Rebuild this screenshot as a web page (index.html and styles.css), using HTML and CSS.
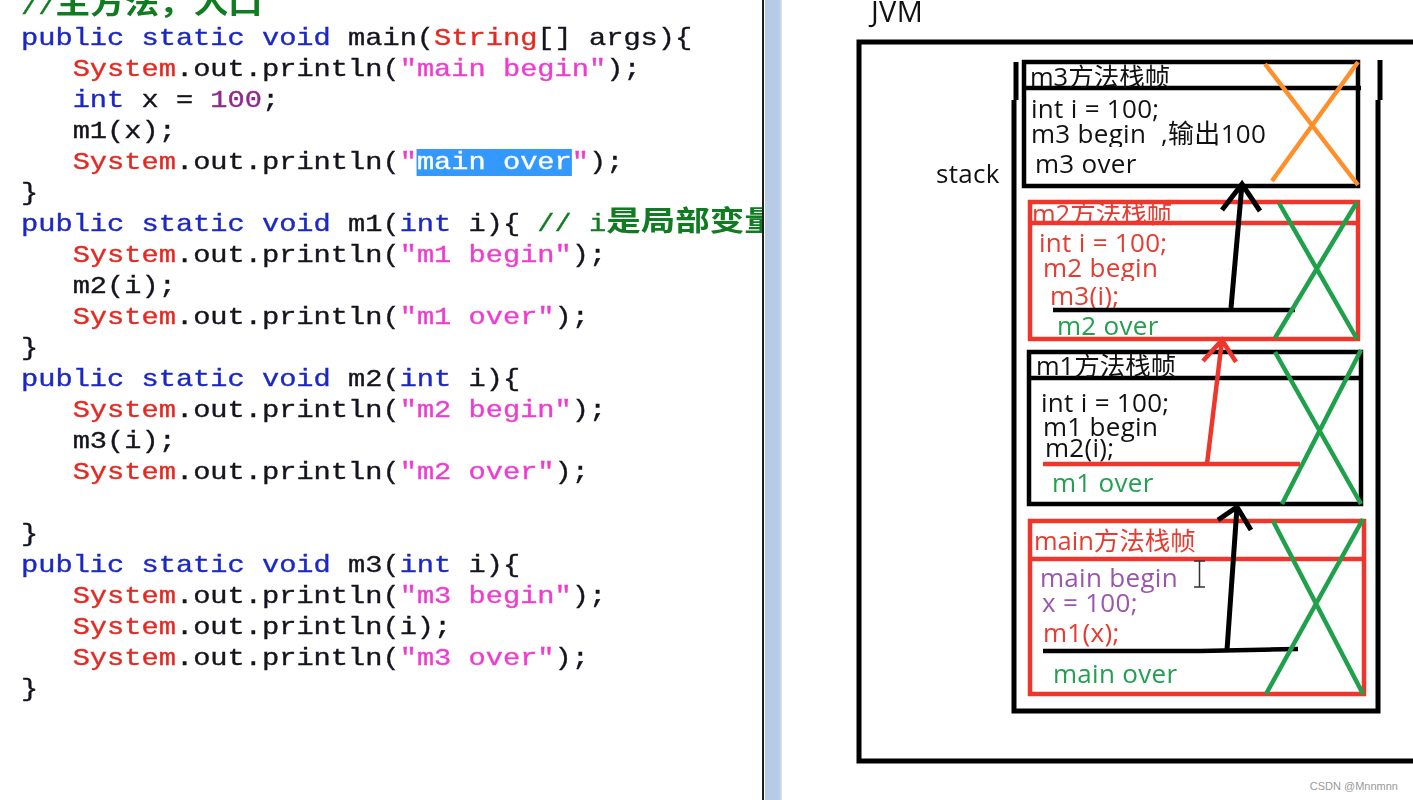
FILE: index.html
```html
<!DOCTYPE html>
<html lang="zh">
<head>
<meta charset="utf-8">
<title>JVM stack</title>
<link rel="stylesheet" href="styles.css">
</head>
<body>
<main class="page">
<section class="code-pane">
<pre class="code"><span class="c">//<span class="cjk">主方法&#xFF0C;入口</span></span>
<span class="k">public static void</span> main(<span class="t">String</span>[] args){
   <span class="t">System</span>.out.println(<span class="s">"main begin"</span>);
   <span class="k">int</span> x = <span class="n">100</span>;
   m1(x);
   <span class="t">System</span>.out.println(<span class="s">"</span><span class="sel">main over</span><span class="s">"</span>);
}
<span class="k">public static void</span> m1(<span class="k">int</span> i){ <span class="c">// i<span class="cjk">是局部变量</span></span>
   <span class="t">System</span>.out.println(<span class="s">"m1 begin"</span>);
   m2(i);
   <span class="t">System</span>.out.println(<span class="s">"m1 over"</span>);
}
<span class="k">public static void</span> m2(<span class="k">int</span> i){
   <span class="t">System</span>.out.println(<span class="s">"m2 begin"</span>);
   m3(i);
   <span class="t">System</span>.out.println(<span class="s">"m2 over"</span>);

}
<span class="k">public static void</span> m3(<span class="k">int</span> i){
   <span class="t">System</span>.out.println(<span class="s">"m3 begin"</span>);
   <span class="t">System</span>.out.println(i);
   <span class="t">System</span>.out.println(<span class="s">"m3 over"</span>);
}</pre>
</section>
<div class="divider"></div>
<section class="canvas">
<svg class="diagram" width="631" height="800" viewBox="782 0 631 800" xmlns="http://www.w3.org/2000/svg">
  <text class="label jvm" x="871" y="22">JVM</text>
  <text class="label bk" x="936" y="183">stack</text>

  <path class="st k5" d="M1413 42H859V761H1413"/>
  <path class="st k5" d="M1016 62V100M1014 100V711H1378V100M1380 60V100"/>

  <!-- m3 -->
  <path class="st k4" d="M1024 62H1358V186H1024ZM1024 88H1361"/>
  <text class="label hd bk" x="1030" y="86">m3方法栈帧</text>
  <text class="label bk" x="1031" y="118">int i = 100;</text>
  <text class="label bk" x="1031" y="143">m3 begin</text>
  <rect class="wipe" x="1030" y="147" width="125" height="5"/>
  <text class="label bk" x="1161" y="143">,输出100</text>
  <text class="label bk" x="1035" y="173">m3 over</text>
  <path class="st or" d="M1265 64L1358 185M1358 62L1272 181"/>

  <!-- m2 -->
  <text class="label hd rt" x="1032" y="223">m2方法栈帧</text>
  <path class="st rd" d="M1030 202H1358V339H1030ZM1030 223H1360"/>
  <text class="label rt" x="1039" y="252">int i = 100;</text>
  <text class="label rt" x="1043" y="277">m2 begin</text>
  <rect class="wipe" x="1040" y="281" width="125" height="5"/>
  <text class="label rt" x="1050" y="305">m3(i);</text>
  <path class="st k4" d="M1053 310H1295"/>
  <text class="label gt" x="1057" y="335">m2 over</text>
  <path class="st gr" d="M1279 203L1357 339M1357 202L1275 338"/>
  <path class="st k5" d="M1231 308L1242 184M1222 210L1242 184L1260 211"/>

  <!-- m1 -->
  <path class="st k4" d="M1029 352H1361V504H1029ZM1029 378H1361"/>
  <text class="label hd bk" x="1036" y="375">m1方法栈帧</text>
  <text class="label bk" x="1041" y="412">int i = 100;</text>
  <text class="label bk" x="1043" y="436">m1 begin</text>
  <text class="label bk" x="1045" y="457">m2(i);</text>
  <path class="st rd" d="M1043 464H1300"/>
  <text class="label gt" x="1052" y="492">m1 over</text>
  <path class="st gr" d="M1275 352L1361 504M1361 350L1282 504"/>
  <path class="st rd" d="M1207 464L1222 340M1203 361L1222 340L1236 362"/>

  <!-- main -->
  <path class="st rd" d="M1030 521H1364V694H1030ZM1030 559H1364"/>
  <text class="label hd rt" x="1034" y="550">main方法栈帧</text>
  <text class="label pt" x="1040" y="587">main begin</text>
  <text class="label pt" x="1042" y="612">x = 100;</text>
  <text class="label rt" x="1043" y="642">m1(x);</text>
  <path class="st k4" d="M1043 651H1200L1298 649"/>
  <text class="label gt" x="1053" y="683">main over</text>
  <path class="st gr" d="M1273 521L1363 694M1363 519L1266 694"/>
  <path class="st k5" d="M1227 650L1237 507M1218 520L1237 507L1251 530"/>

  <!-- text cursor -->
  <path class="beam" d="M1194 561H1205M1199.500 561V587M1194 587H1205"/>
</svg>
<span class="watermark">CSDN @Mnnmnn</span>
</section>
</main>
</body>
</html>
```
FILE: styles.css
```css
html, body {
  margin: 0;
  padding: 0;
  background: #fff;
  overflow: hidden;
}

.page {
  display: flex;
  width: 1413px;
  height: 800px;
  overflow: hidden;
}

.code-pane {
  width: 762px;
  flex: none;
  overflow: hidden;
}

.code {
  margin: -8px 0 0 20.500px;
  font: 400 24px/31px "Liberation Mono", monospace;
  -webkit-text-stroke: 0.35px currentColor;
  color: #14141e;
  white-space: pre;
  transform: scaleX(1.195);
  transform-origin: 0 0;
  filter: blur(0.4px);
}

.k { color: #1c28c4; }
.t { color: #e32a22; }
.s { color: #ee3cd0; }
.n { color: #8f2a8f; }
.c { color: #107c22; }

.cjk {
  font-family: "Noto Sans CJK SC", sans-serif;
  font-weight: 700;
  font-size: 28.9px;
  line-height: 0;
  -webkit-text-stroke: 0;
}

.sel {
  background: #3399ff;
  color: #fff;
}

.divider {
  flex: none;
  width: 20px;
  box-sizing: border-box;
  border-left: 2px solid #1c2026;
  background: linear-gradient(90deg, #fff 0 1px, #b5cbe6 1px 15px, #d8e4f2 18px, #fff 20px);
}

.canvas {
  position: relative;
  flex: 1;
  min-width: 0;
}

.diagram {
  display: block;
  filter: blur(0.4px);
}

.st {
  fill: none;
  stroke-linecap: butt;
  stroke-linejoin: miter;
}

.wipe { fill: #fff; }

.k4 { stroke: #000; stroke-width: 4.500px; }
.k5 { stroke: #000; stroke-width: 5px; }
.rd { stroke: #f0352b; stroke-width: 4.500px; }
.or { stroke: #ff8f2b; stroke-width: 4.500px; }
.gr { stroke: #1fa04a; stroke-width: 4.500px; }

.beam {
  fill: none;
  stroke: #333;
  stroke-width: 1.500px;
}

.label {
  font-family: "Open Sans", "Noto Sans CJK SC", sans-serif;
  font-size: 26px;
  letter-spacing: 0.3px;
}

.hd { font-size: 25.500px; letter-spacing: 0; }
.jvm { font-size: 29px; fill: #111; }
.bk { fill: #111; }
.rt { fill: #e53b30; }
.gt { fill: #22a050; }
.pt { fill: #9a55b0; }

.watermark {
  position: absolute;
  right: 15px;
  bottom: 7px;
  font: 11px/14px "Liberation Sans", sans-serif;
  color: #9a9a9a;
}
```
